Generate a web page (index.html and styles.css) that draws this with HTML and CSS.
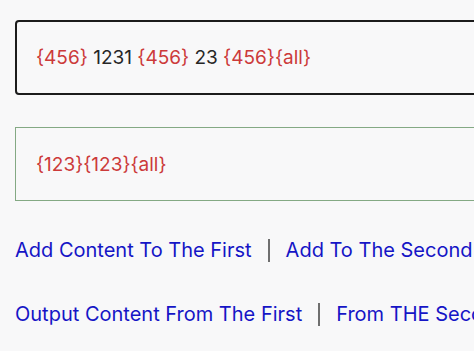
FILE: index.html
```html
<!DOCTYPE html>
<html>
<head>
<meta charset="utf-8">
<link rel="stylesheet" href="styles.css">
</head>
<body>
<div class="page">
  <div class="box box-first">
    <span class="tag">{456}</span>&nbsp;1231&nbsp;<span class="tag">{456}</span>&nbsp;23&nbsp;<span class="tag">{456}</span><span class="tag">{all}</span>
  </div>
  <div class="box box-second">
    <span class="tag">{123}</span><span class="tag">{123}</span><span class="tag">{all}</span>
  </div>
  <div class="actions">
    <a class="link" href="#">Add Content To The First</a><span class="sep"></span><a class="link" href="#">Add To The Second</a>
  </div>
  <div class="actions actions-second">
    <a class="link" href="#">Output Content From The First</a><span class="sep"></span><a class="link" href="#">From THE Second</a>
  </div>
</div>
</body>
</html>
```
FILE: styles.css
```css
html, body {
  margin: 0;
  padding: 0;
  background: #f8f8f9;
  overflow: hidden;
}
.page {
  width: 474px;
  height: 351px;
  overflow: hidden;
  padding: 20px 0 0 15px;
  box-sizing: border-box;
  font-family: Inter, "Noto Sans", sans-serif;
  font-size: 20px;
  color: #222;
}
.box {
  width: 520px;
  display: flex;
  align-items: center;
  white-space: nowrap;
  box-sizing: border-box;
  font-size: 19px;
  color: #262626;
}
.box-first {
  height: 75px;
  border: 2px solid #1c1c1c;
  border-radius: 4px;
  padding-left: 19px;
}
.box-second {
  margin-top: 32px;
  height: 74px;
  border: 1px solid #84a984;
  padding-left: 20px;
}
.tag {
  color: #cc3a3a;
}
.actions {
  display: flex;
  align-items: center;
  white-space: nowrap;
  height: 24px;
  margin-top: 37px;
}
.actions-second {
  margin-top: 40px;
}
.link {
  color: #1515c6;
  text-decoration: none;
}
.sep {
  display: inline-block;
  width: 2px;
  height: 23px;
  background: #6f6f6f;
  margin: 0 16px;
  flex: none;
}
```
